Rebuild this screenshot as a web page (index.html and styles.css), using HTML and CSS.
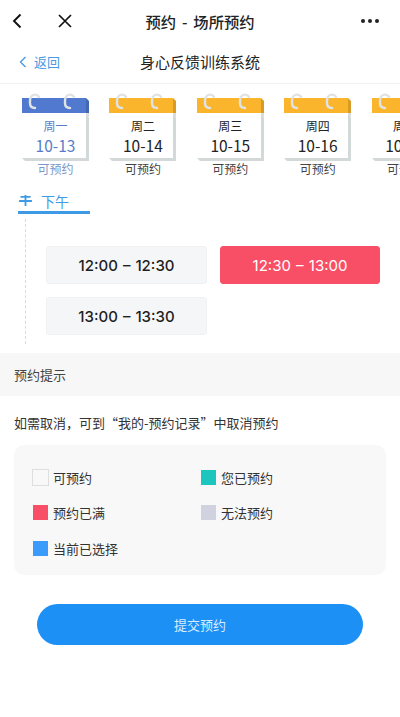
FILE: index.html
```html
<!DOCTYPE html>
<html lang="zh-CN">
<head>
<meta charset="utf-8">
<title>预约 - 场所预约</title>
<link rel="stylesheet" href="styles.css">
</head>
<body>
<svg class="defs" width="0" height="0" aria-hidden="true">
  <symbol id="cal-art" viewBox="0 0 70 68">
    <path d="M0 5h64l3 3v12H0z" fill="currentColor"/>
    <path d="M64 5l3 3v17l-3-5z" fill="#000" fill-opacity=".14"/>
    <path d="M64 20l3 5v43H3l-3-3h64z" fill="#d3d9d9"/>
    <rect x="0" y="20" width="64" height="45" fill="#fff"/>
    <path d="M17 4c-1-2-4-3-6-2-2 1-3 3-3 6v2c0 3 2 5 5 5M52 4c-1-2-4-3-6-2-2 1-3 3-3 6v2c0 3 2 5 5 5" fill="none" stroke="#dfe3e3" stroke-width="2.400" stroke-linecap="round"/>
  </symbol>
</svg>

<header class="nav">
  <div class="nav-left">
    <svg class="nav-back" viewBox="0 0 10 16" aria-hidden="true"><path d="M8.500 1.500L2 8l6.500 6.500" fill="none" stroke="#111" stroke-width="1.900"/></svg>
    <svg class="nav-close" viewBox="0 0 14 14" aria-hidden="true"><path d="M1 1l12 12M13 1L1 13" fill="none" stroke="#111" stroke-width="1.700"/></svg>
  </div>
  <h1 class="nav-title">预约 - 场所预约</h1>
  <div class="nav-more"><i></i><i></i><i></i></div>
</header>

<div class="sub">
  <a class="sub-back">
    <svg viewBox="0 0 8 12" aria-hidden="true"><path d="M6.500 1L1.500 6l5 5" fill="none" stroke="#4a9ae0" stroke-width="1.400"/></svg>
    返回
  </a>
  <h2 class="sub-title">身心反馈训练系统</h2>
</div>

<section class="days">
  <div class="day day-active">
    <div class="cal"><svg class="cal-art"><use href="#cal-art"/></svg><div class="cal-text"><span class="cal-week">周一</span><span class="cal-date">10-13</span></div></div>
    <span class="day-state">可预约</span>
  </div>
  <div class="day">
    <div class="cal"><svg class="cal-art"><use href="#cal-art"/></svg><div class="cal-text"><span class="cal-week">周二</span><span class="cal-date">10-14</span></div></div>
    <span class="day-state">可预约</span>
  </div>
  <div class="day">
    <div class="cal"><svg class="cal-art"><use href="#cal-art"/></svg><div class="cal-text"><span class="cal-week">周三</span><span class="cal-date">10-15</span></div></div>
    <span class="day-state">可预约</span>
  </div>
  <div class="day">
    <div class="cal"><svg class="cal-art"><use href="#cal-art"/></svg><div class="cal-text"><span class="cal-week">周四</span><span class="cal-date">10-16</span></div></div>
    <span class="day-state">可预约</span>
  </div>
  <div class="day">
    <div class="cal"><svg class="cal-art"><use href="#cal-art"/></svg><div class="cal-text"><span class="cal-week">周五</span><span class="cal-date">10-17</span></div></div>
    <span class="day-state">可预约</span>
  </div>
</section>

<section class="period">
  <div class="period-tab">
    <svg viewBox="0 0 14 12" aria-hidden="true"><path d="M1.500 2h11M0 6.500h14M7 0v12" fill="none" stroke="#3f9ae6" stroke-width="2"/></svg>
    <span>下午</span>
  </div>
  <div class="period-body">
    <div class="slots">
      <div class="slot">12:00 – 12:30</div>
      <div class="slot slot-on">12:30 – 13:00</div>
      <div class="slot">13:00 – 13:30</div>
    </div>
  </div>
</section>

<div class="band">预约提示</div>
<p class="note">如需取消，可到“我的-预约记录”中取消预约</p>

<section class="legend">
  <div class="legend-item"><i class="sw sw-free"></i>可预约</div>
  <div class="legend-item"><i class="sw sw-mine"></i>您已预约</div>
  <div class="legend-item"><i class="sw sw-full"></i>预约已满</div>
  <div class="legend-item"><i class="sw sw-no"></i>无法预约</div>
  <div class="legend-item"><i class="sw sw-cur"></i>当前已选择</div>
</section>

<button class="submit" type="button">提交预约</button>
</body>
</html>
```
FILE: styles.css
```css
* { box-sizing: border-box; }
html, body { margin: 0; padding: 0; }
body {
  width: 400px;
  height: 717px;
  overflow: hidden;
  background: #fff;
  color: #222;
  font-family: "Noto Sans CJK SC", "Noto Sans", sans-serif;
}
.defs { display: block; height: 0; }

.nav {
  height: 42px;
  display: grid;
  grid-template-columns: 1fr auto 1fr;
  align-items: center;
  padding: 0 21px;
}
.nav-left { display: flex; align-items: center; gap: 36px; margin-left: -9px; }
.nav-back { width: 10px; height: 16px; display: block; }
.nav-close { width: 14px; height: 14px; display: block; }
.nav-title { margin: 0; font-size: 15.300px; font-weight: 500; word-spacing: 2.500px; color: #222; line-height: 22px; }
.nav-more { display: flex; justify-content: flex-end; gap: 3px; }
.nav-more i { width: 4px; height: 4px; border-radius: 50%; background: #222; }

.sub {
  height: 42px;
  border-bottom: 1px solid #f1f1f1;
  display: grid;
  grid-template-columns: 1fr auto 1fr;
  align-items: center;
  padding: 0 19px 2px;
}
.sub-back { display: flex; align-items: center; gap: 7px; color: #4a9ae0; font-size: 13px; line-height: 20px; }
.sub-back svg { width: 8px; height: 12px; display: block; }
.sub-title { margin: 0; font-size: 15px; font-weight: 400; color: #222; line-height: 20px; }

.days {
  display: flex;
  gap: 20.400px;
  padding: 9px 0 0 22px;
  width: 520px;
}
.day { flex: none; width: 67px; display: flex; flex-direction: column; align-items: center; }
.cal { display: grid; width: 70px; height: 68px; margin-right: -3px; color: #fbb52d; }
.cal > * { grid-area: 1 / 1; }
.cal-art { width: 70px; height: 68px; display: block; }
.cal-text {
  width: 67px;
  padding-top: 25px;
  display: flex;
  flex-direction: column;
  align-items: center;
  color: #222;
}
.cal-week { font-size: 12px; line-height: 16px; }
.cal-date { font-size: 15.500px; line-height: 22px; }
.day-state { font-size: 12px; line-height: 18px; margin-top: -1px; color: #444; }
.day-active .cal { color: #5079cf; }
.day-active .cal-text { color: #5a7cc8; }
.day-active .day-state { color: #7d96c6; }

.period { padding: 12px 0 0 18px; }
.period-tab {
  width: 72px;
  height: 24px;
  border-bottom: 3px solid #3f9ae6;
  display: flex;
  align-items: center;
  gap: 9px;
  padding: 0 0 0 1px;
  color: #3f9ae6;
  font-size: 14px;
  line-height: 20px;
}
.period-tab svg { width: 13px; height: 11px; display: block; }
.period-body {
  margin: 5px 0 0 7px;
  height: 125px;
  border-left: 1px dashed #c5e0f2;
  padding: 27px 0 0 20px;
}
.slots {
  display: grid;
  grid-template-columns: 161px 160px;
  grid-auto-rows: 38px;
  gap: 13px 13px;
}
.slot {
  background: #f5f6f8;
  border: 1px solid #f0f1f3;
  border-radius: 3px;
  display: flex;
  align-items: center;
  justify-content: center;
  color: #1f1f1f;
  font-family: "Inter", sans-serif;
  font-size: 15px;
  font-weight: 500;
  word-spacing: 1px;
}
.slot-on { background: #f94f66; border-color: #f94f66; color: #fff; font-weight: 400; }

.band {
  margin-top: 9px;
  height: 43px;
  background: #f7f7f7;
  padding-left: 14px;
  display: flex;
  align-items: center;
  font-size: 13px;
  color: #444;
}
.note { margin: 17px 0 0 14px; font-size: 13px; line-height: 20px; color: #333; }
.legend {
  margin: 12px 14px 0;
  width: 372px;
  height: 130px;
  background: #f8f8f8;
  border-radius: 10px;
  padding: 14.500px 0 0 19px;
  display: grid;
  grid-template-columns: 168px 168px;
  grid-auto-rows: 35.500px;
  align-items: center;
}
.legend-item { display: flex; align-items: center; gap: 5px; font-size: 13px; color: #333; }
.sw { width: 15px; height: 15px; display: block; flex: none; }
.sw-free { background: #f8f8f8; box-shadow: 0 0 0 1px #dedede; }
.sw-mine { background: #1cc5be; }
.sw-full { background: #f94f66; }
.sw-no { background: #d0d2df; }
.sw-cur { background: #3a9bfb; }

.submit {
  display: block;
  margin: 29px 0 0 37px;
  width: 326px;
  height: 41px;
  border: 0;
  border-radius: 21px;
  background: #1c90f5;
  color: #d8ecfd;
  font-family: inherit;
  font-size: 13px;
}
```
